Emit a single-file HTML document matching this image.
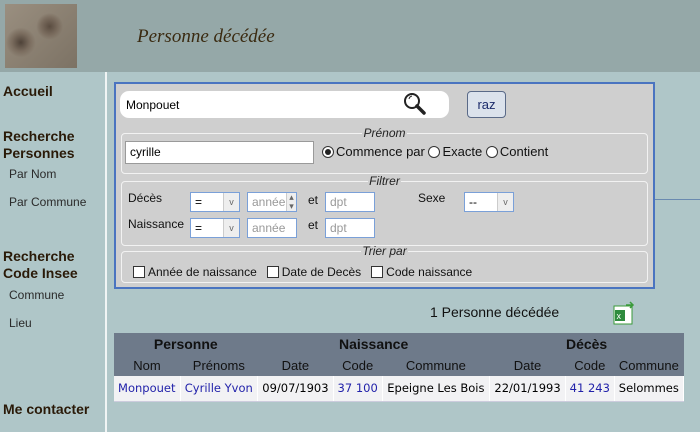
<!DOCTYPE html>
<html><head><meta charset="utf-8"><style>
*{box-sizing:border-box}
body{margin:0;width:700px;height:432px;overflow:hidden;background:#afc6c8;font-family:"Liberation Sans",Arial,sans-serif;position:relative}
.hdr{position:absolute;left:0;top:0;width:700px;height:72px;background:#95a8a8}
.logo{position:absolute;left:5px;top:4px;width:72px;height:64px;background:radial-gradient(circle at 62% 35%,#5a4c40 0,#7a6c5e 14%,transparent 22%),radial-gradient(circle at 22% 60%,#4e4238 0,#7a6c5e 13%,transparent 22%),linear-gradient(135deg,#9a8f80,#7c7264)}
.title{position:absolute;left:137px;top:26px;font-family:"Liberation Serif",serif;font-style:italic;font-size:19px;color:#3a2a10}
.side{position:absolute;left:0;top:72px;width:107px;height:360px;border-right:2px solid #f0f4f4}
.s{position:absolute;left:3px;font-weight:bold;font-size:14px;color:#2a1a08;line-height:17px}
.l{position:absolute;left:9px;font-size:12px;color:#2a2a2a}
.panel{position:absolute;left:114px;top:82px;width:541px;height:207px;background:#cfcfcf;border:2px solid #4a74c0}
.a{position:absolute}
.inp{background:#fff;border:1px solid #9a9a9a;font-size:12px;padding:3px 4px}
fieldset{position:absolute;margin:0;padding:0;border:1px solid #f2f2f2;border-radius:4px}
legend{font-style:italic;font-size:12px;color:#222;margin:0 auto;padding:0 1px;line-height:10px}
.t{font-size:12px;color:#111}
.sel{background:#fff;border:1px solid #7aa0d8;font-size:12px;padding:2px 4px}
.sel i{position:absolute;right:0;top:0;bottom:0;width:16px;border-left:1px solid #ccc;background:#eee;font-style:normal;font-size:9px;text-align:center;line-height:18px;color:#666}
.ph{color:#999}
.cb{display:inline-block;width:12px;height:12px;border:1px solid #333;background:#fff;vertical-align:-2px;margin-right:3px}
.rd{display:inline-block;width:12px;height:12px;border:1px solid #333;border-radius:50%;background:#fff;vertical-align:-2px;margin-right:2px;position:relative}
table{position:absolute;left:114px;top:333px;width:570px;border-collapse:collapse;font-size:13px}
th{background:#6e7a8a;color:#111;font-size:14px;height:21px;padding:0}
.h2 td{background:#6e7a8a;color:#111;text-align:center;height:22px;font-size:13px}
.r td{background:#f2f2f4;font-family:"DejaVu Sans",sans-serif;font-size:11.5px;height:25px;text-align:center;border-right:1px solid #fff;border-bottom:1px solid #ccd;padding:0 3px}
.b{color:#2222aa}
</style></head><body>
<div class="hdr"><div class="logo"></div><div class="title">Personne décédée</div></div>
<div class="side">
<div class="s" style="top:11px">Accueil</div>
<div class="s" style="top:56px">Recherche<br>Personnes</div>
<div class="l" style="top:95px">Par Nom</div>
<div class="l" style="top:123px">Par Commune</div>
<div class="s" style="top:176px">Recherche<br>Code Insee</div>
<div class="l" style="top:216px">Commune</div>
<div class="l" style="top:244px">Lieu</div>
<div class="s" style="top:329px">Me contacter</div>
</div>
<div class="a" style="left:655px;top:199px;width:45px;height:1px;background:#6a8ab0"></div>
<div class="panel">
<div class="a" style="left:4px;top:7px;width:329px;height:27px;background:#fff;border-radius:9px;font-size:12px;padding:7px 6px">Monpouet</div>
<svg class="a" style="left:287px;top:8px" width="24" height="24" viewBox="0 0 24 24"><circle cx="9" cy="9" r="7" fill="none" stroke="#222" stroke-width="2"/><path d="M6 7a4 4 0 0 1 3-3" stroke="#222" fill="none"/><path d="M14 14l7 7" stroke="#222" stroke-width="3.5" stroke-linecap="round"/></svg>
<div class="a" style="left:351px;top:7px;width:39px;height:27px;background:#dbe2ec;border:1px solid #5a6a88;border-radius:4px;font-size:13px;color:#1a2a6a;text-align:center;line-height:25px">raz</div>
<fieldset style="left:5px;top:44px;width:527px;height:46px"><legend>Prénom</legend></fieldset>
<div class="a inp" style="left:9px;top:57px;width:189px;height:23px;font-size:12px">cyrille</div>
<div class="a t" style="left:206px;top:60px;font-size:13px"><span class="rd"><span style="position:absolute;left:2px;top:2px;width:6px;height:6px;border-radius:50%;background:#222"></span></span>Commence par <span class="rd"></span>Exacte <span class="rd"></span>Contient</div>
<fieldset style="left:5px;top:92px;width:527px;height:70px"><legend>Filtrer</legend></fieldset>
<div class="a t" style="left:12px;top:107px">Décès</div>
<div class="a t" style="left:12px;top:133px">Naissance</div>
<div class="a sel" style="left:74px;top:108px;width:50px;height:20px">=<i>v</i></div>
<div class="a sel" style="left:74px;top:134px;width:50px;height:20px">=<i>v</i></div>
<div class="a sel ph" style="left:131px;top:108px;width:50px;height:20px">année<i style="width:10px;line-height:9px">▴<br>▾</i></div>
<div class="a sel ph" style="left:131px;top:134px;width:50px;height:20px">année</div>
<div class="a t" style="left:192px;top:109px">et</div>
<div class="a t" style="left:192px;top:134px">et</div>
<div class="a sel ph" style="left:209px;top:108px;width:50px;height:20px">dpt</div>
<div class="a sel ph" style="left:209px;top:134px;width:50px;height:20px">dpt</div>
<div class="a t" style="left:302px;top:107px">Sexe</div>
<div class="a sel" style="left:348px;top:108px;width:50px;height:20px">--<i>v</i></div>
<fieldset style="left:5px;top:162px;width:527px;height:37px"><legend>Trier par</legend></fieldset>
<div class="a t" style="left:17px;top:181px"><span class="cb"></span>Année de naissance &nbsp; <span class="cb"></span>Date de Decès &nbsp; <span class="cb"></span>Code naissance</div>
</div>
<div class="a" style="left:430px;top:304px;font-size:14px;color:#111">1 Personne décédée</div>
<svg class="a" style="left:612px;top:301px" width="24" height="24" viewBox="0 0 24 24"><rect x="2" y="5" width="18" height="18" fill="#fff" stroke="#3a9a3a"/><rect x="3" y="9" width="10" height="11" fill="#2e8b3e"/><text x="4.5" y="18" font-size="9" fill="#fff" font-family="Liberation Sans">x</text><path d="M14 4h7M18 1l3 3-3 3" stroke="#3a9a3a" fill="none" stroke-width="1.5"/></svg>
<table>
<tr><th colspan="2">Personne</th><th colspan="3">Naissance</th><th colspan="3">Décès</th></tr>
<tr class="h2"><td>Nom</td><td>Prénoms</td><td>Date</td><td>Code</td><td>Commune</td><td>Date</td><td>Code</td><td>Commune</td></tr>
<tr class="r"><td class="b">Monpouet</td><td class="b">Cyrille Yvon</td><td>09/07/1903</td><td class="b">37 100</td><td>Epeigne Les Bois</td><td>22/01/1993</td><td class="b">41 243</td><td>Selommes</td></tr>
</table>
</body></html>
